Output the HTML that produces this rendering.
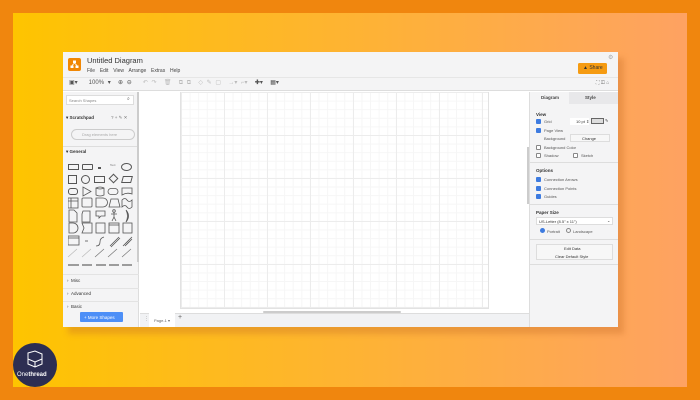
<!DOCTYPE html>
<html><head><meta charset="utf-8"><style>
*{box-sizing:border-box;margin:0;padding:0}
body{width:700px;height:400px;overflow:hidden;background:#f0860e;font-family:"Liberation Sans",sans-serif;position:relative}
.bg{position:absolute;left:13px;top:13px;width:674px;height:374px;background:linear-gradient(90deg,#fec400 0%,#feb52e 45%,#fea262 100%)}
.shadow{position:absolute;left:68px;top:58px;width:556px;height:276px;background:rgba(200,110,40,.35);filter:blur(3px)}
.win{position:absolute;left:63px;top:52px;width:555px;height:275px;background:#fff;font-size:5px;color:#333}
.a{position:absolute}
.t{position:absolute;white-space:nowrap}
.gl{background-color:#fff;background-image:linear-gradient(#ececec 1px,transparent 1px),linear-gradient(90deg,#ececec 1px,transparent 1px),linear-gradient(#f6f6f6 1px,transparent 1px),linear-gradient(90deg,#f6f6f6 1px,transparent 1px);background-size:43px 43px,43px 43px,8.6px 8.6px,8.6px 8.6px}
.cb{position:absolute;width:5px;height:5px;background:#3d7be0;border-radius:1px}
.cbo{position:absolute;width:5px;height:5px;border:0.7px solid #888;border-radius:1px;background:#fff}
.sh{position:absolute;border:0.8px solid #555}
</style></head><body>
<div class="bg"></div>
<div class="shadow"></div>
<div class="win">
 <div class="a" style="left:0;top:0;width:555px;height:25px;background:#f4f4f5"></div>
 <div class="a" style="left:5px;top:6px;width:13px;height:13px;background:#f08705;border-radius:2px"></div>
 <svg class="a" style="left:7px;top:8px" width="9" height="9" viewBox="0 0 9 9"><rect x="3" y="0.5" width="3" height="2.5" fill="#fff"/><rect x="0.5" y="5.5" width="3" height="2.5" fill="#fff"/><rect x="5.5" y="5.5" width="3" height="2.5" fill="#fff"/><path d="M4.5 3L2 5.5M4.5 3L7 5.5" stroke="#fff" stroke-width=".8"/></svg>
 <div class="t" style="left:24px;top:4px;font-size:7.5px;color:#333">Untitled Diagram</div>
 <div class="t" style="left:24px;top:16px;font-size:5px;color:#444;word-spacing:1px">File&nbsp; Edit&nbsp; View&nbsp; Arrange&nbsp; Extras&nbsp; Help</div>
 <div class="a" style="left:515px;top:11px;width:29px;height:11px;background:#f59b12;border-radius:1.5px"></div>
 <div class="t" style="left:520px;top:13px;font-size:5px;color:#333">▲ Share</div>
 <div class="t" style="left:545px;top:2px;font-size:6px;color:#aaa">⚙</div>
 <div class="a" style="left:0;top:25px;width:555px;height:14px;background:#f4f4f5;border-bottom:1px solid #ddd;border-top:1px solid #e6e6e6"></div>
 <div class="t" style="left:6px;top:27px;font-size:6px;color:#555;word-spacing:2px">▣▾ &nbsp;&nbsp;100% ▾ &nbsp;⊕ ⊖ &nbsp; <span style="color:#bbb">↶ ↷ &nbsp;🗑 &nbsp;⧉ ⧉ &nbsp;◇ ✎ ▢ &nbsp;→▾ ⌐▾</span> &nbsp;<b>✚</b>▾ &nbsp;▦▾</div>
 <div class="t" style="left:533px;top:28px;font-size:5px;color:#777">⛶ ◫ ⌂</div>
 <div class="a" style="left:0;top:40px;width:76px;height:235px;background:#f4f4f5;border-right:1px solid #ddd"></div>
 <div class="a" style="left:3px;top:43px;width:68px;height:10px;background:#fff;border:0.7px solid #ddd"></div>
 <div class="t" style="left:6px;top:45.5px;font-size:4px;color:#888">Search Shapes</div>
 <div class="t" style="left:64px;top:44px;font-size:5px;color:#555">⌕</div>
 <div class="t" style="left:3px;top:63px;font-size:4.5px;font-weight:bold">▾ Scratchpad</div>
 <div class="t" style="left:48px;top:63px;font-size:4.5px;color:#777">? + ✎ ✕</div>
 <div class="a" style="left:8px;top:77px;width:64px;height:11px;border:0.8px solid #ccc;border-radius:6px"></div>
 <div class="t" style="left:19px;top:80px;font-size:4px;color:#aaa">Drag elements here</div>
 <div class="a" style="left:0;top:94px;width:76px;height:1px;background:#ddd"></div>
 <div class="t" style="left:3px;top:97px;font-size:4.5px;font-weight:bold">▾ General</div>
 <div class="sh" style="left:5px;top:112px;width:11px;height:6px"></div>
 <div class="sh" style="left:19px;top:112px;width:11px;height:6px;border-radius:1px"></div>
 <div class="sh" style="left:35px;top:115px;width:3px;height:0"></div>
 <div class="t" style="left:47px;top:111px;font-size:3px;color:#777">Text</div>
 <div class="sh" style="left:58px;top:111px;width:11px;height:8px;border-radius:50%"></div>
 <div class="sh" style="left:5px;top:123px;width:9px;height:9px"></div>
 <div class="sh" style="left:18px;top:123px;width:9px;height:9px;border-radius:50%"></div>
 <div class="sh" style="left:31px;top:124px;width:11px;height:7px"></div>
 <div class="sh" style="left:47px;top:123px;width:7px;height:7px;transform:rotate(45deg)"></div>
 <div class="sh" style="left:59px;top:124px;width:10px;height:7px;transform:skewX(-15deg)"></div>
 <div class="sh" style="left:5px;top:136px;width:10px;height:7px;border-radius:3px"></div>
 <svg class="a" style="left:5px;top:134px" width="68" height="72" viewBox="0 0 68 72" fill="none" stroke="#555" stroke-width=".8">
  <path d="M15 1v9l8-4.5z"/><path d="M28 2v7q4 2 8 0v-7q-4-2-8 0q4 2 8 0"/><rect x="40" y="2.5" width="10" height="6" rx="3"/><path d="M54 2h10v6q-5-2-10 1z"/>
  <g transform="translate(0,-2)"><rect x="0" y="14" width="10" height="10"/><path d="M0 17h10M3 14v10"/><rect x="14" y="14" width="10" height="9" rx="1"/><path d="M28 14h7a4 4 0 010 9h-7z"/><path d="M41 23l2-8h7l2 8z"/><path d="M54 16q3-3 5 0t5 0v7q-3 3-5 0t-5 0z"/></g>
  <g transform="translate(0,-3)"><path d="M1 27h5l3 3v9h-8z"/><path d="M15 28h7v11h-8v-8z"/><path d="M28 28h9v5h-4l-2 2v-2h-3z"/><circle cx="46" cy="28" r="1.3"/><path d="M46 29v5M43 31h6M46 34l-2 4M46 34l2 4"/><path d="M58 27q5 6 0 12q3-6 0-12"/></g>
  <g transform="translate(0,-5)"><path d="M1 42h4a5 5 0 010 10h-4z"/><path d="M14 42h10v10h-10l2-5z"/><rect x="28" y="42" width="9" height="10"/><rect x="41" y="42" width="10" height="10"/><path d="M41 44h10"/><rect x="55" y="42" width="9" height="10"/></g>
  <g transform="translate(0,-6)"><rect x="0" y="56" width="11" height="9"/><path d="M0 58h11"/><path d="M17 61h3"/><path d="M28 66q4 0 4-4t4-5"/><path d="M42 66l9-9M43 67l9-9"/><path d="M55 66l9-9M57 66l7-7"/></g>
 </svg>
 <svg class="a" style="left:4px;top:196px" width="68" height="22" viewBox="0 0 68 22" fill="none" stroke="#777" stroke-width=".7">
  <path d="M1 9l9-8M15 9l9-8" stroke="#bbb"/><path d="M28 9l9-8M41 9l9-8M55 9l9-8"/>
  <path d="M1 17h11M15 17h10M29 17h10M42 17h10M55 17h10" stroke="#444" stroke-width="1"/>
 </svg>
 <div class="a" style="left:74px;top:40px;width:2px;height:170px;background:#ccc"></div>
 <div class="a" style="left:0;top:222px;width:76px;height:1px;background:#e3e3e3"></div>
 <div class="t" style="left:4px;top:226px;font-size:4.5px">› &nbsp;Misc</div>
 <div class="a" style="left:0;top:236px;width:76px;height:1px;background:#e3e3e3"></div>
 <div class="t" style="left:4px;top:239px;font-size:4.5px">› &nbsp;Advanced</div>
 <div class="a" style="left:0;top:249px;width:76px;height:1px;background:#e3e3e3"></div>
 <div class="t" style="left:4px;top:252px;font-size:4.5px">› &nbsp;Basic</div>
 <div class="a" style="left:17px;top:260px;width:43px;height:10px;background:#4d8ff7;border-radius:1px"></div>
 <div class="t" style="left:21px;top:262.5px;font-size:4.5px;color:#fff">+ More Shapes</div>
 <div class="a" style="left:77px;top:40px;width:389px;height:221px;background:#fff"></div>
 <div class="a gl" style="left:117px;top:40px;width:309px;height:217px;border-left:1px solid #e2e2e2;border-right:1px solid #e2e2e2;border-bottom:1px solid #e2e2e2"></div>
 <div class="a" style="left:200px;top:259px;width:138px;height:2px;background:#ccc;border-radius:1px"></div>
 <div class="a" style="left:77px;top:261px;width:389px;height:14px;background:#f1f2f4;border-top:1px solid #ddd"></div>
 <div class="t" style="left:81px;top:264px;font-size:5px;color:#777">⋮</div>
 <div class="a" style="left:86px;top:261px;width:26px;height:14px;background:#fff"></div>
 <div class="t" style="left:91px;top:266px;font-size:4px;color:#666">Page-1 ▾</div>
 <div class="t" style="left:115px;top:262px;font-size:7px;color:#666">+</div>
 <div class="a" style="left:466px;top:40px;width:89px;height:235px;background:#f4f4f5;border-left:1px solid #ddd"></div>
 <div class="a" style="left:464px;top:95px;width:2px;height:57px;background:#ccc"></div>
 <div class="a" style="left:506px;top:40px;width:49px;height:12px;background:#e8e8ea"></div>
 <div class="t" style="left:478px;top:43px;font-size:4.5px;font-weight:bold;color:#444">Diagram</div>
 <div class="t" style="left:522px;top:43px;font-size:4.5px;font-weight:bold;color:#444">Style</div>
 <div class="t" style="left:473px;top:60px;font-size:4.5px;font-weight:bold">View</div>
 <div class="cb" style="left:473px;top:67px"></div><div class="t" style="left:481px;top:67px;font-size:4px;color:#555">Grid</div>
 <div class="a" style="left:507px;top:66px;width:19px;height:7px;background:#fff"></div><div class="t" style="left:513px;top:67px;font-size:4px">10 pt ⇕</div>
 <div class="a" style="left:528px;top:66px;width:13px;height:6px;border:0.8px solid #666;background:#ddd"></div><div class="t" style="left:542px;top:66px;font-size:4px">✎</div>
 <div class="cb" style="left:473px;top:76px"></div><div class="t" style="left:481px;top:76px;font-size:4px;color:#555">Page View</div>
 <div class="t" style="left:481px;top:84px;font-size:4px;color:#555">Background</div>
 <div class="a" style="left:507px;top:82px;width:40px;height:8px;border:0.7px solid #ddd;background:#f7f7f7"></div><div class="t" style="left:519px;top:84px;font-size:4px">Change</div>
 <div class="cbo" style="left:473px;top:93px"></div><div class="t" style="left:481px;top:93px;font-size:4px;color:#555">Background Color</div>
 <div class="cbo" style="left:473px;top:101px"></div><div class="t" style="left:481px;top:101px;font-size:4px;color:#555">Shadow</div>
 <div class="cbo" style="left:510px;top:101px"></div><div class="t" style="left:518px;top:101px;font-size:4px;color:#555">Sketch</div>
 <div class="a" style="left:466px;top:110px;width:89px;height:1px;background:#ddd"></div>
 <div class="t" style="left:473px;top:116px;font-size:4.5px;font-weight:bold">Options</div>
 <div class="cb" style="left:473px;top:125px"></div><div class="t" style="left:481px;top:125px;font-size:4px;color:#555">Connection Arrows</div>
 <div class="cb" style="left:473px;top:134px"></div><div class="t" style="left:481px;top:134px;font-size:4px;color:#555">Connection Points</div>
 <div class="cb" style="left:473px;top:142px"></div><div class="t" style="left:481px;top:142px;font-size:4px;color:#555">Guides</div>
 <div class="a" style="left:466px;top:152px;width:89px;height:1px;background:#ddd"></div>
 <div class="t" style="left:473px;top:158px;font-size:4.5px;font-weight:bold">Paper Size</div>
 <div class="a" style="left:473px;top:165px;width:77px;height:8px;background:#fff;border:0.7px solid #ddd"></div>
 <div class="t" style="left:476px;top:166.5px;font-size:4px">US-Letter (8.5" x 11")</div><div class="t" style="left:544px;top:166px;font-size:4px">⌄</div>
 <div class="a" style="left:477px;top:176px;width:5px;height:5px;border-radius:50%;background:#3d7be0"></div><div class="t" style="left:484px;top:177px;font-size:4px;color:#555">Portrait</div>
 <div class="a" style="left:503px;top:176px;width:5px;height:5px;border-radius:50%;border:0.7px solid #888"></div><div class="t" style="left:510px;top:177px;font-size:4px;color:#555">Landscape</div>
 <div class="a" style="left:466px;top:187px;width:89px;height:1px;background:#ddd"></div>
 <div class="a" style="left:473px;top:192px;width:77px;height:16px;border:0.7px solid #ddd;background:#f7f7f7"></div>
 <div class="t" style="left:501px;top:194px;font-size:4px">Edit Data</div>
 <div class="t" style="left:492px;top:202px;font-size:4px">Clear Default Style</div>
 <div class="a" style="left:466px;top:212px;width:89px;height:1px;background:#ddd"></div>
</div>
<div class="a" style="position:absolute;left:13px;top:343px;width:44px;height:44px;border-radius:50%;background:#2d2e52"></div>
<svg style="position:absolute;left:25px;top:350px" width="20" height="22" viewBox="0 0 20 22" fill="none" stroke="#fff" stroke-width="1"><path d="M3 3l7-2 7 3v5l-7 3-7-3z"/><path d="M3 9v5l7 3 7-3v-5"/><path d="M10 12v5"/></svg>
<div style="position:absolute;left:17px;top:372px;font-size:6px;color:#fff;font-family:'Liberation Sans',sans-serif">One<b>thread</b></div>
</body></html>
